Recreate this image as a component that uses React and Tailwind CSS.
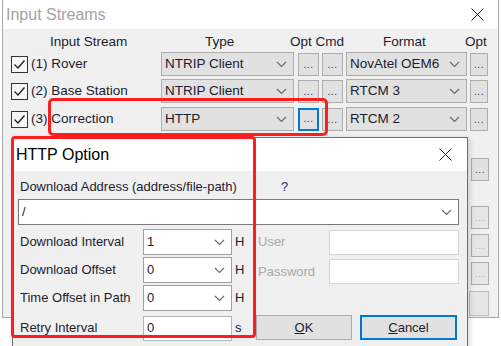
import React from 'react';

const Chevron = ({ className = '' }) => (
  <svg width="11" height="7" viewBox="0 0 11 7" className={className}>
    <path d="M1 1 L5.5 5.5 L10 1" fill="none" stroke="#6b6b6b" strokeWidth="1.2" />
  </svg>
);

const CloseX = () => (
  <svg width="13" height="13" viewBox="0 0 13 13">
    <path d="M0.5 0.5 L12.5 12.5 M12.5 0.5 L0.5 12.5" stroke="#222" strokeWidth="1" />
  </svg>
);

const Check = () => (
  <svg width="17" height="17" viewBox="0 0 17 17" className="shrink-0">
    <rect x="0.5" y="0.5" width="16" height="16" fill="#f7f7f7" stroke="#333" />
    <path d="M3.5 8.5 L7 12 L13.5 4.5" fill="none" stroke="#222" strokeWidth="1.4" />
  </svg>
);

// gray combo in the stream table
const GrayCombo = ({ w, text }) => (
  <div className={`${w} h-[24px] flex items-center justify-between bg-[#e1e1e1] border border-[#adadad] pl-[3px] pr-[6px]`}>
    <span>{text}</span>
    <Chevron />
  </div>
);

const Dots = ({ w, focus, disabled }) => (
  <div
    className={`${w} h-[23px] flex items-end justify-center pb-[5px] text-[10px] leading-none tracking-[0.5px] ${
      focus ? 'border-2 border-[#0078d7]' : 'border border-[#adadad]'
    } ${disabled ? 'bg-[#e6e6e6] text-[#b0b0b0]' : 'bg-[#e1e1e1] text-[#2b2b66]'}`}
  >
    ...
  </div>
);

const StreamRow = ({ label, type, format, focus, className = '' }) => (
  <div className={`flex items-center h-[24px] pl-[8px] ${className}`}>
    <div className="w-[150px] flex items-center">
      <Check />
      <span className="ml-[3px]">{label}</span>
    </div>
    <GrayCombo w="w-[133px]" text={type} />
    <div className="ml-[4px]"><Dots w="w-[21px]" focus={focus} /></div>
    <div className="ml-[3px]"><Dots w="w-[21px]" /></div>
    <div className="ml-[3px]"><GrayCombo w="w-[121px]" text={format} /></div>
    <div className="ml-[3px]"><Dots w="w-[18px]" /></div>
  </div>
);

const WhiteCombo = ({ w, text, border = 'border-[#a0a0a0]' }) => (
  <div className={`${w} h-[26px] flex items-center justify-between bg-white border ${border} pl-[3px] pr-[6px]`}>
    <span>{text}</span>
    <Chevron />
  </div>
);

const OptRow = ({ label, value, unit, combo = true }) => (
  <div className="flex items-center h-[26px]">
    <span className="w-[123px]">{label}</span>
    {combo ? (
      <WhiteCombo w="w-[89px]" text={value} />
    ) : (
      <div className="w-[89px] h-[25px] flex items-center bg-white border border-[#b4b4b4] pl-[3px]">{value}</div>
    )}
    <span className="ml-[3px]">{unit}</span>
  </div>
);

export default function App() {
  return (
    <div className="relative w-[501px] h-[346px] overflow-hidden bg-white text-[13.5px] text-[#1c1c30] font-['Liberation_Sans',Arial,sans-serif]">
      {/* Input Streams window */}
      <div className="ml-[2px] w-[497px] h-[318px] flex flex-col border-x border-b border-[#a8a8a8]">
        <div className="h-[29px] shrink-0 bg-white flex items-center justify-between pl-[3px] pr-[14px]">
          <span className="text-[16px] text-[#a3a3a3]">Input Streams</span>
          <CloseX />
        </div>
        <div className="flex-1 bg-[#f0f0f0] flex flex-col">
          <div className="h-[23px] flex items-start pt-[5px] leading-[16px]">
            <span className="ml-[47px] w-[155px]">Input Stream</span>
            <span className="w-[85px]">Type</span>
            <span className="w-[93px]">Opt Cmd</span>
            <span className="w-[82px]">Format</span>
            <span>Opt</span>
          </div>
          <StreamRow label="(1) Rover" type="NTRIP Client" format="NovAtel OEM6" />
          <StreamRow label="(2) Base Station" type="NTRIP Client" format="RTCM 3" className="mt-[3px]" />
          <StreamRow label="(3) Correction" type="HTTP" format="RTCM 2" focus className="mt-[4px]" />
          <div className="flex flex-col items-end pr-[9px]">
            <div className="mt-[27px]"><Dots w="w-[18px]" /></div>
            <div className="mt-[25px]"><Dots w="w-[18px]" disabled /></div>
            <div className="mt-[5px]"><Dots w="w-[18px]" disabled /></div>
            <div className="mt-[5px]"><Dots w="w-[18px]" disabled /></div>
            <div className="mt-[6px] w-[20px] h-[25px] border border-[#bdbdbd] bg-[#e6e6e6]" />
          </div>
        </div>
      </div>

      {/* HTTP Option dialog */}
      <div className="absolute left-[12px] top-[137px] w-[456px] h-[220px] border border-[#6e6e6e] bg-[#f0f0f0] flex flex-col text-[13px] shadow-[2px_2px_6px_rgba(0,0,0,0.15)]">
        <div className="h-[33px] shrink-0 bg-white flex items-center justify-between pl-[3px] pr-[15px]">
          <span className="text-[16px] text-black">HTTP Option</span>
          <CloseX />
        </div>
        <div className="flex flex-col pl-[5px]">
          <div className="flex items-center h-[16px] mt-[8px] pl-[2px]">
            <span className="w-[261px]">Download Address (address/file-path)</span>
            <span className="text-[#2b2b66]">?</span>
          </div>
          <div className="mt-[4px]">
            <WhiteCombo w="w-[441px]" text="/" border="border-[#7a7a7a]" />
          </div>
          <div className="flex mt-[4px]">
            <div className="flex flex-col gap-[2px] pl-[2px] w-[238px]">
              <OptRow label="Download Interval" value="1" unit="H" />
              <OptRow label="Download Offset" value="0" unit="H" />
              <OptRow label="Time Offset in Path" value="0" unit="H" />
              <div className="mt-[2px]">
                <OptRow label="Retry Interval" value="0" unit="s" combo={false} />
              </div>
            </div>
            <div className="flex flex-col">
              <div className="flex items-center h-[26px] pl-[2px] text-[#a8a8a8]">
                <span className="w-[71px]">User</span>
                <div className="w-[130px] h-[25px] bg-white border border-[#d6d6d6]" />
              </div>
              <div className="flex items-center h-[25px] mt-[4px] pl-[2px] text-[#a8a8a8]">
                <span className="w-[71px]">Password</span>
                <div className="w-[130px] h-[25px] bg-white border border-[#d6d6d6]" />
              </div>
              <div className="flex mt-[31px] gap-[8px]">
                <div className="w-[96px] h-[25px] flex items-center justify-center bg-[#e1e1e1] border border-[#adadad]">
                  <span><span className="underline">O</span>K</span>
                </div>
                <div className="w-[97px] h-[25px] flex items-center justify-center bg-[#e1e1e1] border-2 border-[#0078d7]">
                  <span><span className="underline">C</span>ancel</span>
                </div>
              </div>
            </div>
          </div>
        </div>
      </div>

      {/* red highlight boxes */}
      <div className="absolute left-[48px] top-[98px] w-[280px] h-[38px] border-[3px] border-[#ff1e1e] rounded-[5px]" />
      <div className="absolute left-[11px] top-[136px] w-[245px] h-[202px] border-[3px] border-[#ff1e1e] rounded-[4px]" />
    </div>
  );
}
